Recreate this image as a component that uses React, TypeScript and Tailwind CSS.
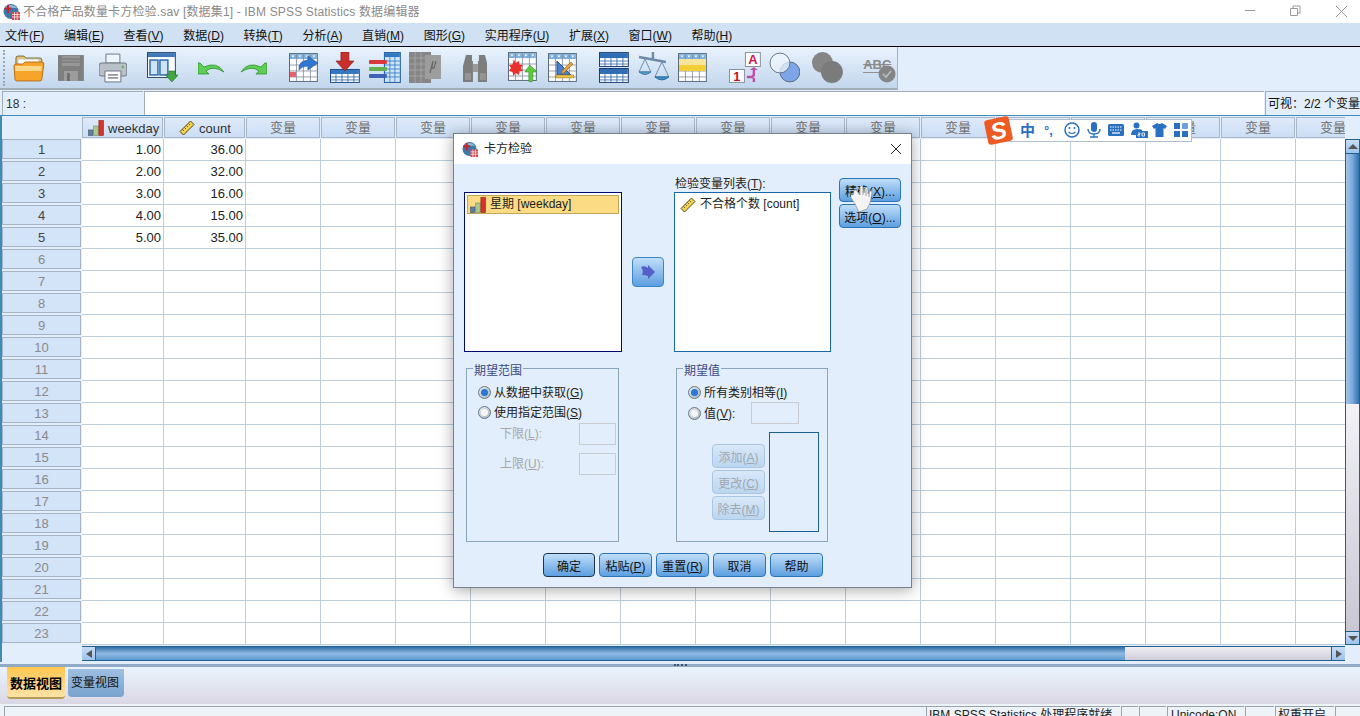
import type { ReactNode } from 'react';

const FONT = 'font-["Liberation_Sans","Noto_Sans_CJK_SC",sans-serif]';

const menus: [string, string][] = [
  ['文件', 'F'], ['编辑', 'E'], ['查看', 'V'], ['数据', 'D'], ['转换', 'T'], ['分析', 'A'],
  ['直销', 'M'], ['图形', 'G'], ['实用程序', 'U'], ['扩展', 'X'], ['窗口', 'W'], ['帮助', 'H'],
];

const data: Record<number, [string, string]> = {
  1: ['1.00', '36.00'],
  2: ['2.00', '32.00'],
  3: ['3.00', '16.00'],
  4: ['4.00', '15.00'],
  5: ['5.00', '35.00'],
};

const rows = Array.from({ length: 23 }, (_, i) => i + 1);
const varCols = Array.from({ length: 15 }, (_, i) => i);

function Key({ label, k, suffix = '' }: { label: string; k: string; suffix?: string }) {
  return (
    <span className="whitespace-nowrap">
      {label}(<u>{k}</u>){suffix}
    </span>
  );
}

function SpssLogo({ size = 18 }: { size?: number }) {
  return (
    <svg width={size} height={size} viewBox="0 0 18 18">
      <circle cx="8" cy="8.5" r="7.5" fill="#3f77a8" />
      <path d="M2 5a7.5 7.5 0 0 1 12 0z" fill="#8db6d6" />
      <path d="M5 2v8M1.5 5.5h7" stroke="#c8202c" strokeWidth="2" />
      <rect x="9" y="9" width="8" height="8" fill="#d9424a" />
      <path d="M9 11.5h8M9 14h8M11.5 9v8M14.2 9v8" stroke="#fff" strokeWidth=".7" />
    </svg>
  );
}

function BarsIcon() {
  return (
    <svg width="16" height="16" viewBox="0 0 16 16" className="shrink-0">
      <rect x="0.5" y="10" width="4.5" height="5.5" fill="#5f7fa0" stroke="#3c526a" strokeWidth=".6" />
      <rect x="5.7" y="6" width="4.5" height="9.5" fill="#a9c88e" stroke="#6f8a5e" strokeWidth=".6" />
      <rect x="10.9" y="0.5" width="4.5" height="15" fill="#d8322e" stroke="#8c1f1c" strokeWidth=".6" />
    </svg>
  );
}

function RulerIcon() {
  return (
    <svg width="16" height="16" viewBox="0 0 16 16" className="shrink-0">
      <path d="M11.5 1 15 4.500 4.500 15 1 11.500z" fill="#f2d24e" stroke="#54481a" strokeWidth="1" />
      <path d="M9.500 3.500 11 5M7.500 5.500 9 7M5.500 7.500 7 9M3.500 9.500 5 11" stroke="#54481a" strokeWidth=".8" />
    </svg>
  );
}

function TableBase({ header = '#7fb0dc' }: { header?: string }) {
  return (
    <>
      <rect x=".5" y=".5" width="28" height="28" fill="#fff" stroke="#5a6a7a" />
      <rect x="1" y="1" width="27" height="5" fill={header} />
      <path d="M2.500 2.500h3l-1.500 2zM9.500 2.500h3l-1.500 2zM16.500 2.500h3l-1.500 2zM23.500 2.500h3l-1.500 2z" fill="#fff" />
      <path d="M1 12h27M1 18h27M1 24h27M7.500 1v27M14.500 1v27M21.500 1v27" stroke="#7f8a96" strokeWidth=".8" />
    </>
  );
}

function Toolbar() {
  return (
    <div className="flex h-[43px] w-[898px] items-center border-r border-b-2 border-r-[#a8b4c0] border-b-[#a3adb8] bg-linear-to-b from-[#e9f3fd] to-[#c2d6ec]">
      <div className="ml-[3px] h-[36px] w-[3px] border-l-2 border-dotted border-[#9aa7b5]" />
      <svg width="32" height="28" viewBox="0 0 32 28" className="ml-[7px]">
        <path d="M3 4q0-2 2-2h6l2 2h14q2 0 2 2v8H3z" fill="#e8c873" stroke="#7a6a3a" />
        <path d="M5 5h21v8H5z" fill="#fff" stroke="#a9b4bc" strokeWidth=".6" />
        <path d="M1 12q0-2 2-2h7l2-2h17q2 0 2 2l-2 15q0 2-2 2H4q-2 0-2-2z" fill="#f7a52a" stroke="#b8701a" />
        <path d="M2 12h27l-.5 5H2.500z" fill="#fdd88a" />
      </svg>
      <svg width="26" height="26" viewBox="0 0 26 26" className="ml-[13px]">
        <path d="M0 0h26v26H0z" fill="#7f7f7f" />
        <rect x="4" y="1" width="18" height="10" fill="#979797" />
        <path d="M4 4h18M4 7h18" stroke="#6e6e6e" />
        <rect x="6" y="16" width="14" height="10" fill="#9c9c9c" />
        <rect x="9" y="18" width="3" height="8" fill="#6f6f6f" />
      </svg>
      <svg width="28" height="30" viewBox="0 0 28 30" className="ml-[15px]">
        <path d="M7 1h14v9H7z" fill="#eef5fc" stroke="#6f7b88" />
        <path d="M2 10h24q2 0 2 3v8q0 2-2 2H2q-2 0-2-2v-8q0-3 2-3z" fill="#b9c0c8" stroke="#6c7680" />
        <circle cx="24" cy="14" r="1.200" fill="#5ab05a" />
        <path d="M6 18h16v11H6z" fill="#fff" stroke="#6c7680" />
        <path d="M9 22h10M9 25h10" stroke="#3d4752" />
      </svg>
      <svg width="32" height="31" viewBox="0 0 32 31" className="ml-[20px]">
        <rect x=".5" y=".5" width="28" height="25" fill="#fff" stroke="#26466e" />
        <rect x="1" y="1" width="27" height="4" fill="#3f78b8" />
        <rect x="3" y="8" width="8" height="15" fill="#cfe3f7" stroke="#2c6bb0" strokeWidth="1.500" />
        <rect x="13" y="8" width="8" height="15" fill="#cfe3f7" stroke="#2c6bb0" strokeWidth="1.500" />
        <path d="M22 19h6v4h3.500l-6.500 7-6.500-7H22z" fill="#3fa83f" stroke="#27702a" strokeWidth=".6" />
      </svg>
      <svg width="28" height="15" viewBox="0 0 28 15" className="ml-[20px]">
        <path d="M0 3v11h11L8 11q7-6 18 1-7-11-20-5L2 3z" fill="#5ccf54" stroke="#2a8f2c" strokeWidth=".8" />
      </svg>
      <svg width="28" height="15" viewBox="0 0 28 15" className="ml-[13px]">
        <path d="M28 3v11H17l3-3Q13 5 2 12 9 1 22 7l4-4z" fill="#5ccf54" stroke="#2a8f2c" strokeWidth=".8" />
      </svg>
      <svg width="32" height="30" viewBox="0 0 32 30" className="ml-[22px]">
        <TableBase />
        <rect x="1" y="19" width="6" height="5" fill="#e8606a" />
        <path d="M10 17q-1-9 9-10V3l10 7-10 7v-4q-6 0-9 4z" fill="#2f78d2" stroke="#1d4f92" strokeWidth=".6" />
      </svg>
      <svg width="30" height="31" viewBox="0 0 30 31" className="ml-[9px]">
        <rect x=".5" y="17.500" width="29" height="13" fill="#fff" stroke="#1d4f92" />
        <rect x="1" y="18" width="28" height="4" fill="#3277c0" />
        <path d="M1 25h28M1 28h28M6 22v8M12 22v8M18 22v8M24 22v8" stroke="#2a62a6" strokeWidth=".8" />
        <path d="M11 0h8v9h5l-9 10-9-10h5z" fill="#c9302c" stroke="#8a1c1a" strokeWidth=".7" />
      </svg>
      <svg width="32" height="31" viewBox="0 0 32 31" className="ml-[9px]">
        <rect x="15.500" y=".5" width="16" height="30" fill="#cfe4f8" stroke="#1d5b9c" />
        <rect x="16" y="1" width="15" height="4" fill="#2f78c0" />
        <path d="M16 9h15M16 13h15M16 17h15M16 21h15M16 25h15M21 5v25M26 5v25" stroke="#2f78c0" strokeWidth=".8" />
        <rect x="0" y="8" width="18" height="4" rx="1" fill="#d8383c" />
        <rect x="0" y="15" width="18" height="4" rx="1" fill="#62b04e" />
        <rect x="0" y="22" width="18" height="4" rx="1" fill="#3d62b8" />
      </svg>
      <div className="ml-[8px] flex h-[31px] w-[32px] items-center">
        <svg width="32" height="31" viewBox="0 0 32 31">
          <rect x="0" y="0" width="22" height="31" fill="#868686" />
          <path d="M0 6h22M0 12h22M0 18h22M0 24h22M6 0v31M12 0v31" stroke="#a9a9a9" strokeWidth=".8" />
          <rect x="16" y="3" width="16" height="24" fill="#9d9d9d" />
          <path d="M21 21l3-12M24 9l-1 6q0 2 2 1l2-7" stroke="#666" strokeWidth="1.200" fill="none" />
        </svg>
      </div>
      <svg width="25" height="29" viewBox="0 0 25 29" className="ml-[22px]">
        <path d="M3 2h6v6h1v21H0V13zM22 2h-6v6h-1v21h10V13z" fill="#7d7d7d" />
        <rect x="10" y="11" width="5" height="8" fill="#9b9b9b" />
        <path d="M2 20h6v7H2zM17 20h6v7h-6z" fill="#949494" />
      </svg>
      <svg width="30" height="31" viewBox="0 0 30 31" className="ml-[21px]">
        <TableBase />
        <path d="M6 7l1.500 4 3.500-2 .5 3.500 3.500.5-2 3 2 3-3.500.5L11 23l-3.500-2-2 3-1-4L1 19l2-3-2-3 3.500-.5z" fill="#e8302c" />
        <path d="M22 13l7 7h-4v7q0 3-2 3l-2-.5V20h-4z" fill="#5ecb3e" stroke="#2f8c2a" strokeWidth=".6" />
      </svg>
      <svg width="30" height="30" viewBox="0 0 30 30" className="ml-[10px]">
        <TableBase />
        <path d="M9 8v14h14z" fill="#4a80d0" stroke="#27508e" />
        <rect x="8" y="22" width="18" height="3" fill="#eec24a" stroke="#8b6f1c" strokeWidth=".5" />
        <path d="M14 18 23 9l2 2-9 9-3 1z" fill="#e8a33a" stroke="#7a5518" strokeWidth=".6" />
      </svg>
      <svg width="30" height="31" viewBox="0 0 30 31" className="ml-[21px]">
        <rect x=".5" y=".5" width="29" height="14" fill="#fff" stroke="#1d3f72" />
        <rect x="1" y="1" width="28" height="5" fill="#2f6db4" />
        <path d="M1 9h28M1 12h28M6 6v8M12 6v8M18 6v8M24 6v8" stroke="#2a62a6" strokeWidth=".8" />
        <rect x=".5" y="16.500" width="29" height="14" fill="#fff" stroke="#1d3f72" />
        <rect x="1" y="17" width="28" height="5" fill="#2f6db4" />
        <path d="M1 25h28M1 28h28M6 22v8M12 22v8M18 22v8M24 22v8" stroke="#2a62a6" strokeWidth=".8" />
      </svg>
      <svg width="32" height="32" viewBox="0 0 32 32" className="ml-[9px]">
        <path d="M15 0v8M1 5l27 5" stroke="#6f8aa8" strokeWidth="2.500" />
        <path d="M7 7 1 20h12zM24 10l-7 15h14z" fill="none" stroke="#5f87aa" strokeWidth=".9" />
        <path d="M1 20q6 5 12 0z" fill="#5ca4d0" stroke="#3a7aa8" />
        <path d="M17 25q7 6 14 0z" fill="#3b8ec8" stroke="#2a6ea0" />
      </svg>
      <svg width="30" height="30" viewBox="0 0 30 30" className="ml-[8px]">
        <TableBase />
        <rect x="1" y="12" width="27" height="6" fill="#f3cf36" />
        <rect x="1" y="6" width="27" height="6" fill="#f8e49a" />
      </svg>
      <svg width="33" height="31" viewBox="0 0 33 31" className="ml-[21px]">
        <rect x="16.500" y=".5" width="15" height="14" fill="#fff" stroke="#8a9099" />
        <text x="24" y="12" textAnchor="middle" fontSize="13" fontWeight="700" fill="#d01650" fontFamily="Liberation Sans">A</text>
        <rect x=".5" y="17.500" width="15" height="13" fill="#fff" stroke="#8a9099" />
        <text x="8" y="29" textAnchor="middle" fontSize="13" fontWeight="700" fill="#c81020" fontFamily="Liberation Sans">1</text>
        <path d="M25 16v6q0 3-3 3h-4M25 30v-4" stroke="#c04ca8" strokeWidth="2.400" fill="none" />
        <path d="M21 18l4-3 4 3z" fill="#c04ca8" />
      </svg>
      <svg width="32" height="31" viewBox="0 0 32 31" className="ml-[7px]">
        <circle cx="21" cy="20" r="10" fill="#7da6ea" stroke="#5a6a80" />
        <circle cx="11" cy="11" r="10" fill="#eef4fb" fillOpacity=".75" stroke="#6a7786" />
      </svg>
      <svg width="31" height="31" viewBox="0 0 31 31" className="ml-[12px]">
        <circle cx="10.500" cy="10.500" r="10.500" fill="#858585" />
        <circle cx="20" cy="20" r="11" fill="#7b7b7b" />
      </svg>
      <div className="relative ml-[20px] h-[30px] w-[34px]">
        <span className={`absolute left-0 top-[5px] text-[13px] font-bold leading-none text-[#8b8b8b] line-through ${FONT}`}>ABC</span>
        <div className="absolute left-0 top-[19px] h-[1px] w-[22px] bg-[#8f8f8f]" />
        <svg width="18" height="18" viewBox="0 0 18 18" className="absolute left-[15px] top-[12px]">
          <circle cx="9" cy="9" r="8.500" fill="#858585" />
          <path d="M5 9l3 3 5-6" stroke="#bdbdbd" strokeWidth="1.600" fill="none" />
        </svg>
      </div>
    </div>
  );
}

function Grid() {
  return (
    <div className="relative flex h-[547px] w-full border-t border-t-[#3f8bb6] bg-[#e2eefb]">
      <div className="h-full w-[1345px] overflow-hidden border-l-2 border-l-[#3f8bb6]">
        {/* Column header */}
        <div className="flex h-[23px] pt-[1px]">
          <div className="h-[22px] w-[80px] shrink-0" />
          <div className="flex h-[21px] w-[81px] shrink-0 items-center gap-[4px] border border-[#a9b8c6] bg-linear-to-b from-[#dfeafa] to-[#cbdef5] pl-[5px]">
            <BarsIcon />
            <span className="translate-y-[1px] text-[13px] leading-none text-[#333]">weekday</span>
          </div>
          <div className="ml-[1px] flex h-[21px] w-[81px] shrink-0 items-center gap-[4px] border border-[#a9b8c6] bg-linear-to-b from-[#dfeafa] to-[#cbdef5] pl-[14px]">
            <RulerIcon />
            <span className="translate-y-[1px] text-[13px] leading-none text-[#333]">count</span>
          </div>
          {varCols.map((c) => (
            <div key={c} className="ml-[1px] flex h-[21px] w-[74px] shrink-0 items-center justify-center border border-[#a9b8c6] bg-linear-to-b from-[#dfeafa] to-[#cbdef5] text-[13px] leading-none text-[#6f6f6f]">
              变量
            </div>
          ))}
        </div>
        {/* Rows */}
        <div className="flex flex-col">
          {rows.map((r) => (
            <div key={r} className="flex h-[22px]">
              <div className="w-[80px] shrink-0 bg-[#e2eefb] pr-[1px]">
                <div className={`flex h-[20px] items-center justify-center border border-[#a4b4c4] bg-[#d3e3f8] text-[13px] leading-none ${data[r] ? 'text-[#444]' : 'text-[#8a8a8a]'}`}>
                  {r}
                </div>
              </div>
              <div className="flex w-[82px] shrink-0 items-center justify-end border-r border-b border-[#bccddc] bg-white pr-[2px] text-[13px] leading-none text-[#222]">
                {data[r]?.[0]}
              </div>
              <div className="flex w-[82px] shrink-0 items-center justify-end border-r border-b border-[#bccddc] bg-white pr-[2px] text-[13px] leading-none text-[#222]">
                {data[r]?.[1]}
              </div>
              {varCols.map((c) => (
                <div key={c} className="w-[75px] shrink-0 border-r border-b border-[#bccddc] bg-white" />
              ))}
            </div>
          ))}
        </div>
        {/* Horizontal scrollbar */}
        <div className="ml-[80px] mt-[1px] flex h-[15px] w-[1263px] border-y border-[#24608f]">
          <div className="flex w-[14px] items-center justify-center border-r border-[#24608f] bg-linear-to-b from-[#c6ddf6] to-[#9ec3ec]">
            <div className="h-0 w-0 border-y-[4px] border-r-[6px] border-y-transparent border-r-[#555]" />
          </div>
          <div className="w-[1029px] bg-linear-to-b from-[#2e70a8] via-[#8fb8e0] to-[#5d9bd4]" />
          <div className="flex-1 bg-linear-to-b from-[#efeef4] to-[#cfcdd8]" />
          <div className="flex w-[14px] items-center justify-center border-l border-[#24608f] bg-linear-to-b from-[#c6ddf6] to-[#9ec3ec]">
            <div className="h-0 w-0 border-y-[4px] border-l-[6px] border-y-transparent border-l-[#555]" />
          </div>
        </div>
      </div>
      {/* Vertical scrollbar */}
      <div className="mt-[23px] flex h-[506px] w-[15px] flex-col border-x border-[#24608f]">
        <div className="flex h-[15px] shrink-0 items-center justify-center border-y border-[#24608f] bg-linear-to-b from-[#c6ddf6] to-[#9ec3ec]">
          <div className="h-0 w-0 border-x-[5px] border-b-[5px] border-x-transparent border-b-[#555]" />
        </div>
        <div className="h-[250px] shrink-0 bg-linear-to-r from-[#a4c6ea] via-[#7aa9db] to-[#2f71ab]" />
        <div className="flex-1 bg-linear-to-b from-[#f2f2f7] to-[#c9c7d3]" />
        <div className="flex h-[14px] shrink-0 items-center justify-center border-y border-[#24608f] bg-linear-to-b from-[#c6ddf6] to-[#9ec3ec]">
          <div className="h-0 w-0 border-x-[5px] border-t-[5px] border-x-transparent border-t-[#555]" />
        </div>
      </div>
    </div>
  );
}

function DlgButton({ children, disabled, dark, className = '' }: { children: ReactNode; disabled?: boolean; dark?: boolean; className?: string }) {
  const tone = disabled
    ? 'border-[#a9c6e2] from-[#d8e8f8] to-[#bcd6f0] text-[#a0a8b0]'
    : dark
      ? 'border-[#1d3550] from-[#c0def8] to-[#5c9fe0] text-[#111]'
      : 'border-[#2b74b8] from-[#c0def8] to-[#5c9fe0] text-[#111]';
  return (
    <div className={`flex items-center justify-center rounded-[4px] border bg-linear-to-b pt-[3px] text-[12px] leading-none ${tone} ${className}`}>
      {children}
    </div>
  );
}

function Radio({ checked, children }: { checked?: boolean; children: ReactNode }) {
  return (
    <div className="flex h-[20px] items-center gap-[3px] text-[12px] leading-none text-[#222]">
      <span className="flex h-[13px] w-[13px] shrink-0 items-center justify-center rounded-full border border-[#66788a] bg-linear-to-br from-[#e8ecf0] to-[#aab3bd]">
        {checked ? <span className="h-[7px] w-[7px] rounded-full bg-[#2a78d0]" /> : <span className="h-[7px] w-[7px] rounded-full bg-[#f4f6f8]" />}
      </span>
      <span className="translate-y-[1px]">{children}</span>
    </div>
  );
}

function GroupBox({ title, className = '', children }: { title: string; className?: string; children: ReactNode }) {
  return (
    <div className={`relative h-[174px] border border-[#8ba6bc] ${className}`}>
      <span className="absolute left-[6px] top-[-5px] bg-[#e2eefb] px-[1px] text-[12px] leading-[14px] text-[#3c4a86]">{title}</span>
      {children}
    </div>
  );
}

function Dialog() {
  return (
    <div className="absolute left-[453px] top-[133px] h-[455px] w-[459px] border border-[#77828c] bg-[#e2eefb] shadow-[0_2px_14px_rgba(0,0,0,0.35)]">
      <div className="flex h-[30px] items-center bg-white pl-[8px] pr-[9px]">
        <SpssLogo size={17} />
        <span className="ml-[5px] text-[12px] leading-none text-[#222]">卡方检验</span>
        <svg width="12" height="12" viewBox="0 0 12 12" className="ml-auto">
          <path d="M1 1l10 10M11 1 1 11" stroke="#222" strokeWidth="1" />
        </svg>
      </div>
      {/* Lists and side buttons */}
      <div className="flex pl-[10px] pt-[14px]">
        <div className="mt-[14px] h-[160px] w-[158px] border border-[#000b70] bg-white p-[2px]">
          <div className="flex h-[19px] items-center gap-[4px] border border-[#c2a658] bg-[#fbdc84] pl-[2px] text-[12px] leading-none text-[#222]">
            <BarsIcon />
            <span className="-translate-y-[1px]">星期 [weekday]</span>
          </div>
        </div>
        <DlgButton className="ml-[10px] mt-[79px] h-[30px] w-[32px] !border-[#3d86c6] !pt-0">
          <svg width="16" height="14" viewBox="0 0 16 14">
            <path d="M1 2q4-2 7 1V0l7 7-7 7v-3Q5 10 2 10q2-4-1-8z" fill="#5460c8" />
          </svg>
        </DlgButton>
        <div className="ml-[10px] w-[157px]">
          <div className="h-[14px] pl-[1px] text-[12px] leading-[13px] text-[#222]">
            <Key label="检验变量列表" k="T" suffix=":" />
          </div>
          <div className="h-[160px] border border-[#1b66a8] bg-white pl-[5px] pt-[2px]">
            <div className="flex h-[19px] items-center gap-[4px] text-[12px] leading-none text-[#222]">
              <RulerIcon />
              <span className="-translate-y-[1px]">不合格个数 [count]</span>
            </div>
          </div>
        </div>
        <div className="ml-[8px] flex flex-col gap-[2px]">
          <DlgButton className="h-[24px] w-[62px]"><Key label="精确" k="X" suffix="..." /></DlgButton>
          <DlgButton className="h-[24px] w-[62px]"><Key label="选项" k="O" suffix="..." /></DlgButton>
        </div>
      </div>
      {/* Group boxes */}
      <div className="mt-[16px] flex pl-[12px]">
        <GroupBox title="期望范围" className="w-[153px]">
          <div className="pl-[11px] pt-[13px]">
            <Radio checked><Key label="从数据中获取" k="G" /></Radio>
            <Radio><Key label="使用指定范围" k="S" /></Radio>
            <div className="mt-[1px] flex flex-col gap-[8px] text-[12px] leading-none text-[#a8a8a8]">
              <div className="flex h-[22px] items-center pl-[22px]">
                <Key label="下限" k="L" suffix=":" />
                <div className="ml-auto mr-[2px] h-[22px] w-[37px] border border-[#c8ccd0]" />
              </div>
              <div className="flex h-[22px] items-center pl-[22px]">
                <Key label="上限" k="U" suffix=":" />
                <div className="ml-auto mr-[2px] h-[22px] w-[37px] border border-[#c8ccd0]" />
              </div>
            </div>
          </div>
        </GroupBox>
        <GroupBox title="期望值" className="ml-[57px] w-[152px]">
          <div className="pl-[11px] pt-[13px]">
            <Radio checked><Key label="所有类别相等" k="I" /></Radio>
            <div className="flex items-center">
              <Radio><Key label="值" k="V" suffix=":" /></Radio>
              <div className="ml-[16px] h-[22px] w-[48px] border border-[#c8ccd0]" />
            </div>
            <div className="mt-[8px] flex">
              <div className="ml-[24px] mt-[12px] flex flex-col gap-[2px]">
                <DlgButton disabled className="h-[24px] w-[53px]"><Key label="添加" k="A" /></DlgButton>
                <DlgButton disabled className="h-[24px] w-[53px]"><Key label="更改" k="C" /></DlgButton>
                <DlgButton disabled className="h-[24px] w-[53px]"><Key label="除去" k="M" /></DlgButton>
              </div>
              <div className="ml-[4px] h-[100px] w-[50px] border border-[#1f5f8f]" />
            </div>
          </div>
        </GroupBox>
      </div>
      {/* Footer buttons */}
      <div className="ml-[89px] mt-[11px] flex gap-[4px]">
        <DlgButton dark className="h-[24px] w-[52px]">确定</DlgButton>
        <DlgButton className="h-[24px] w-[53px]"><Key label="粘贴" k="P" /></DlgButton>
        <DlgButton className="h-[24px] w-[53px]"><Key label="重置" k="R" /></DlgButton>
        <DlgButton className="h-[24px] w-[53px]">取消</DlgButton>
        <DlgButton className="h-[24px] w-[53px]">帮助</DlgButton>
      </div>
      {/* Mouse pointer */}
      <svg width="26" height="30" viewBox="0 0 26 30" className="absolute left-[397px] top-[49px]">
        <path d="M3 9q-1-3 2-2l4 5 0-8q1-3 3 0l1 6 1-5q2-2 3 1l0 5 2-3q2-1 2 2l-2 10-3 6-8 3-4-8-5-8q0-2 3-1z" fill="#f4f4f4" stroke="#9a9a9a" strokeWidth=".8" />
        <path d="M12 5v7M15 6v7M18 9v5" stroke="#8a8a8a" strokeWidth=".8" />
      </svg>
    </div>
  );
}

function SogouBar() {
  return (
    <div className="absolute left-[986px] top-[116px] flex h-[28px] w-[207px] items-center">
      <div className="absolute left-[14px] top-[3px] h-[23px] w-[192px] border border-[#b4bec8] bg-white" />
      <div className="relative z-10 flex h-[25px] w-[25px] -rotate-12 items-center justify-center rounded-[3px] bg-[#ee5a24] text-[24px] font-bold italic leading-none text-white">S</div>
      <div className="relative z-10 flex items-center text-[#2a70c0]">
        <span className="ml-[9px] w-[15px] text-[15px] font-bold leading-none">中</span>
        <span className="ml-[9px] w-[15px] text-[13px] font-bold leading-none">°,</span>
        <svg width="16" height="16" viewBox="0 0 16 16" className="ml-[5px]">
          <circle cx="8" cy="8" r="7" fill="none" stroke="#2a70c0" strokeWidth="1.500" />
          <circle cx="5.500" cy="6" r="1" fill="#2a70c0" />
          <circle cx="10.500" cy="6" r="1" fill="#2a70c0" />
          <path d="M4.500 10q3.500 3 7 0" fill="none" stroke="#2a70c0" strokeWidth="1.200" />
        </svg>
        <svg width="14" height="16" viewBox="0 0 14 16" className="ml-[7px]">
          <rect x="4" y="0" width="6" height="10" rx="3" fill="#2a70c0" />
          <path d="M1 7q0 5 6 5t6-5M7 12v3M3 15h8" fill="none" stroke="#2a70c0" strokeWidth="1.400" />
        </svg>
        <svg width="16" height="12" viewBox="0 0 16 12" className="ml-[7px]">
          <rect x="0" y="0" width="16" height="12" rx="1.500" fill="#2a70c0" />
          <path d="M2 3h12M2 6h12" stroke="#fff" strokeWidth="1.200" strokeDasharray="1.500 1" />
          <path d="M4 9h8" stroke="#fff" strokeWidth="1.200" />
        </svg>
        <svg width="17" height="16" viewBox="0 0 17 16" className="ml-[7px]">
          <circle cx="5.500" cy="3.500" r="3" fill="#2a70c0" />
          <path d="M0 13q0-6 6-6t5 2v4z" fill="#2a70c0" />
          <rect x="5" y="9" width="12" height="7" fill="#2a70c0" />
          <path d="M7 11h2v1.500H7V14h2M11 11v3h2.500v-3z" stroke="#fff" strokeWidth=".8" fill="none" />
        </svg>
        <svg width="15" height="14" viewBox="0 0 15 14" className="ml-[4px]">
          <path d="M5 0q2.500 2 5 0l5 3-2 3-1.500-1v9h-8V5L2 6 0 3z" fill="#2a70c0" />
        </svg>
        <svg width="14" height="14" viewBox="0 0 14 14" className="ml-[7px]">
          <rect x="0" y="0" width="6" height="6" fill="#2a70c0" />
          <rect x="8" y="0" width="6" height="6" rx="1" fill="#6aa0dc" />
          <rect x="0" y="8" width="6" height="6" fill="#2a70c0" />
          <rect x="8" y="8" width="6" height="6" fill="#2a70c0" />
        </svg>
      </div>
    </div>
  );
}

function StatusBox({ className = '', children }: { className?: string; children?: ReactNode }) {
  return (
    <div className={`h-[16px] shrink-0 border-l border-t border-[#9aa4ae] pl-[2px] pt-[2px] text-[12px] leading-none text-[#222] ${className}`}>
      {children}
    </div>
  );
}

export default function App() {
  return (
    <div className={`relative h-[716px] w-[1360px] overflow-hidden bg-[#e2eefb] ${FONT}`}>
      {/* Title bar */}
      <div className="flex h-[23px] items-center bg-white pl-[3px]">
        <SpssLogo />
        <span className="ml-[2px] text-[12px] leading-none tracking-[.16px] text-[#8a8a8a]">不合格产品数量卡方检验.sav [数据集1] - IBM SPSS Statistics 数据编辑器</span>
        <svg width="104" height="14" viewBox="0 0 104 14" className="ml-auto mr-[11px]">
          <path d="M0 5.500h10" stroke="#999" />
          <path d="M45.500 3.500h7v7h-7zM48 3V1h7v7h-2" fill="none" stroke="#999" />
          <path d="M91 1l11 11M102 1 91 12" stroke="#999" />
        </svg>
      </div>
      {/* Menu bar */}
      <div className="flex h-[24px] items-center gap-[19.6px] border-b border-black bg-[#cfe1f3] pl-[5px] pt-[2px] text-[12px] leading-none text-[#111]">
        {menus.map(([label, k]) => (
          <Key key={k} label={label} k={k} />
        ))}
      </div>
      <Toolbar />
      {/* Cell editor bar */}
      <div className="mt-[1px] flex h-[24px] text-[12px] leading-none">
        <div className="ml-[2px] flex h-full w-[141px] items-center border-t border-l border-[#a3adb8] pl-[3px] text-[#333]">18 :</div>
        <div className="ml-[1px] h-full w-[1120px] border-t border-l border-[#a3adb8] bg-white" />
        <div className="ml-[1px] flex h-full flex-1 items-center overflow-hidden whitespace-nowrap border-t border-l border-[#a3adb8] pl-[2px] text-[#111]">可视：2/2 个变量</div>
      </div>
      <Grid />
      {/* Splitter */}
      <div className="flex h-[5px] items-center justify-center border-b-[3px] border-b-[#8fa9c6] bg-[#e2eefb]">
        <div className="h-[1px] w-[13px] translate-y-[2px] border-t-2 border-dotted border-[#44586c]" />
      </div>
      {/* View tabs */}
      <div className="flex h-[37px] items-start bg-linear-to-b from-[#eaf3fc] to-[#dad7e3] pl-[7px]">
        <div className="flex h-[32px] w-[58px] items-center justify-center rounded-b-[4px] border-b-2 border-[#b59a56] bg-linear-to-b from-[#fdc64c] to-[#fee3a4] pt-[3px] text-[13px] font-bold leading-none text-black">数据视图</div>
        <div className="ml-[3px] mt-[2px] flex h-[28px] w-[56px] items-center justify-center rounded-b-[4px] bg-linear-to-b from-[#9fbfe0] to-[#78a3cf] pr-[2px] text-[12px] leading-none text-[#111]">变量视图</div>
      </div>
      {/* Status bar */}
      <div className="flex h-[12px] items-start overflow-hidden bg-[#eef3f8] pl-[4px] pt-[2px]">
        <StatusBox className="w-[922px]" />
        <StatusBox className="w-[194px] whitespace-nowrap">IBM SPSS Statistics 处理程序就绪</StatusBox>
        <StatusBox className="ml-[1px] w-[17px]" />
        <StatusBox className="ml-[1px] w-[27px]" />
        <StatusBox className="ml-[1px] w-[77px] pl-[3px]">Unicode:ON</StatusBox>
        <StatusBox className="ml-[1px] w-[29px]" />
        <StatusBox className="ml-[1px] w-[59px]">权重开启</StatusBox>
        <StatusBox className="ml-[1px] flex-1" />
      </div>
      <SogouBar />
      <Dialog />
    </div>
  );
}
